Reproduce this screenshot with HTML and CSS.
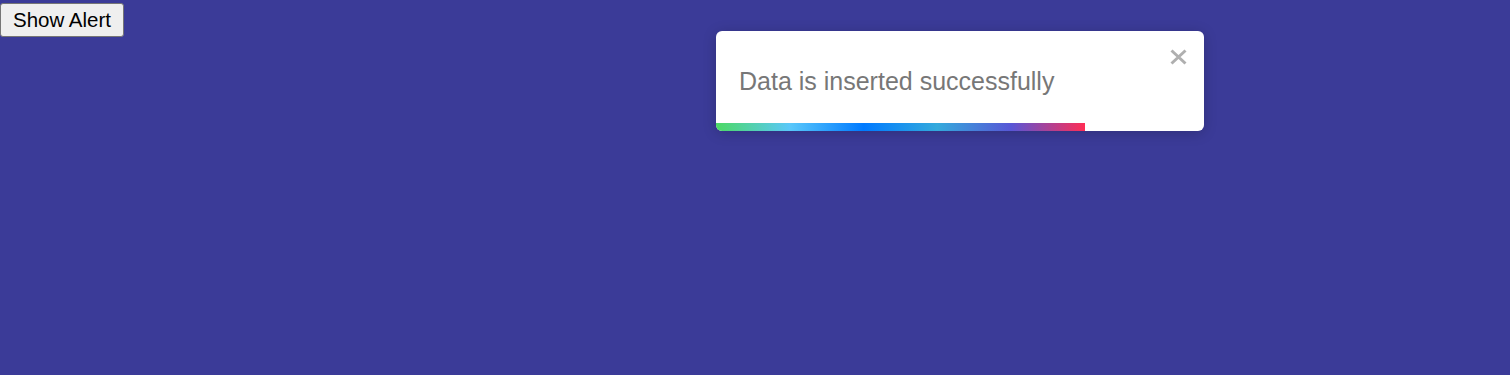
FILE: index.html
```html
<!DOCTYPE html>
<html>
<head>
<meta charset="utf-8">
<link rel="stylesheet" href="styles.css">
</head>
<body>
<button class="show-btn">Show Alert</button>
<div class="toast">
  <p class="toast-msg">Data is inserted successfully</p>
  <svg class="toast-close" width="17" height="16" viewBox="0 0 17 16">
    <path d="M1.5 1.5 L15.5 14.5 M15.5 1.5 L1.5 14.5" stroke="#afafaf" stroke-width="3" fill="none"/>
  </svg>
  <div class="toast-progress" style="width: 369px"></div>
</div>
</body>
</html>
```

FILE: styles.css
```css
html, body {
  margin: 0;
  padding: 0;
  background: #3b3b98;
  height: 100%;
}
body {
  padding-top: 3px;
  box-sizing: border-box;
  font-family: "Liberation Sans", Arial, sans-serif;
}
.show-btn {
  display: block;
  margin: 0;
  font-family: "Liberation Sans", Arial, sans-serif;
  font-size: 20.5px;
  line-height: 24px;
  padding: 4px 12px 4px 12px;
  border: 1px solid #767676;
  border-radius: 3px;
  background: #efefef;
  color: #000;
}
.toast {
  position: absolute;
  top: 31px;
  left: 716px;
  width: 488px;
  height: 100px;
  box-sizing: border-box;
  background: #fff;
  border-radius: 6px;
  overflow: hidden;
  box-shadow: 0 2px 14px rgba(0, 0, 0, 0.2);
  padding: 36px 23px 0;
}
.toast-msg {
  margin: 0;
  font-size: 25px;
  line-height: 29px;
  color: #777;
}
.toast-close {
  position: absolute;
  top: 18px;
  right: 17px;
}
.toast-progress {
  position: absolute;
  left: 0;
  bottom: 0;
  height: 8px;
  background: linear-gradient(to right, #4cd964, #5ac8fa, #007aff, #34aadc, #5856d6, #ff2d55);
}
```
